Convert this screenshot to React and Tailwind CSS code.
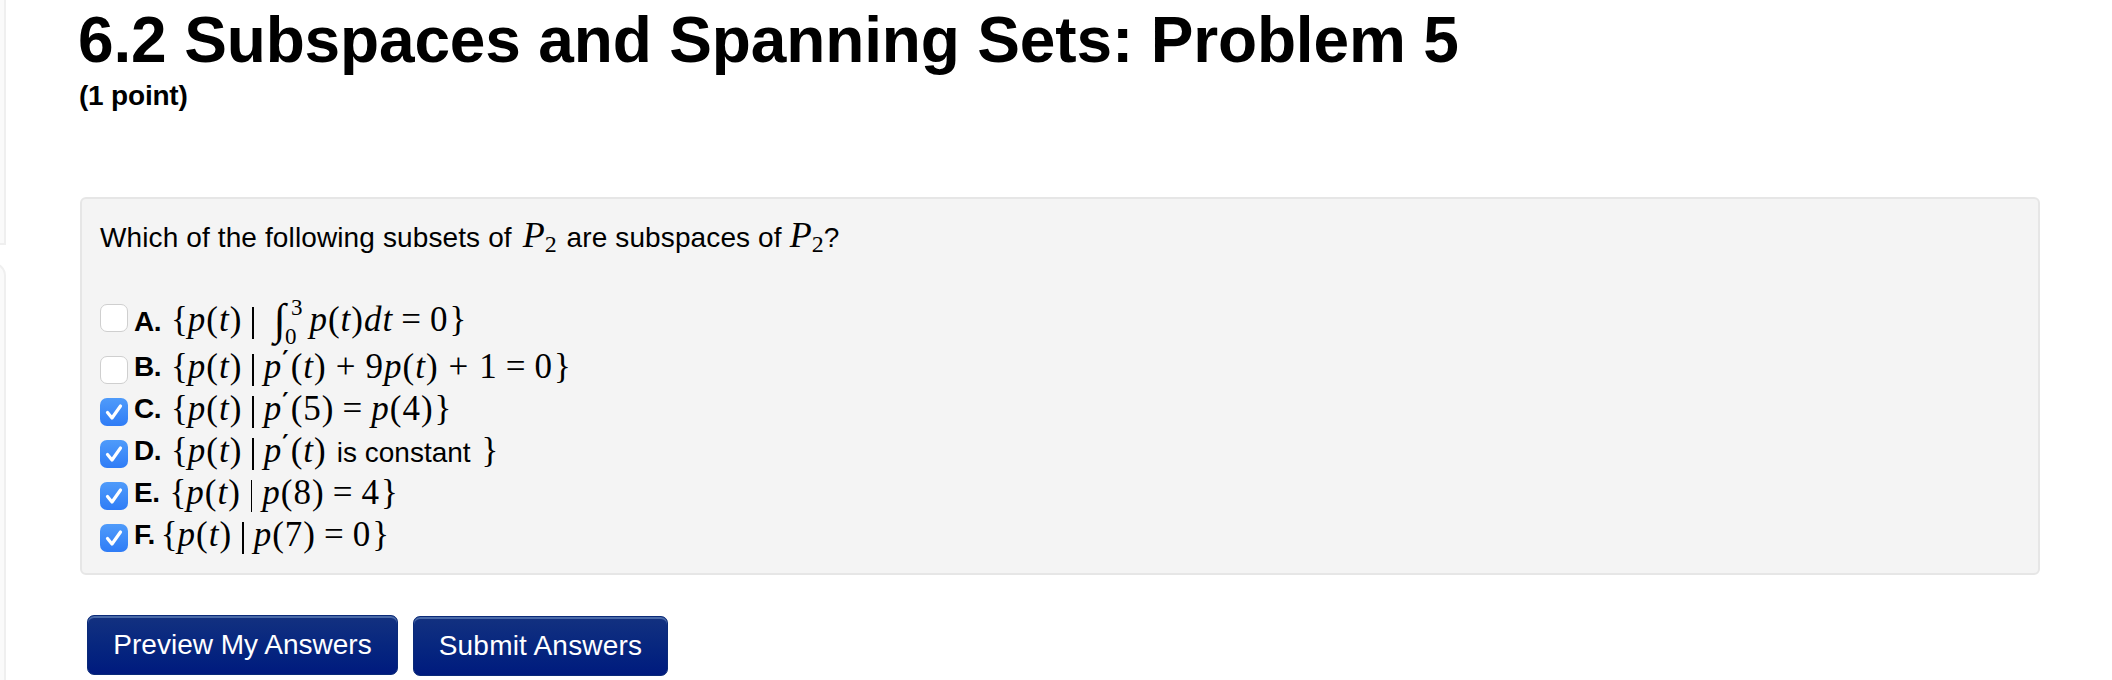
const sans = { fontFamily: '"Liberation Sans", Arial, sans-serif' };

function V({ children }) {
  return <span className="font-['Liberation_Serif',serif] italic">{children}</span>;
}
function R({ children, cls = "" }) {
  return <span className={`font-['Liberation_Serif',serif] ${cls}`}>{children}</span>;
}
const LB = () => <R cls="tracking-normal">{"{"}</R>;
const RB = () => <R cls="ml-[1px] tracking-normal">{"}"}</R>;
const Bar = () => <span className="inline-block w-[1.5px] h-[32px] bg-black mx-[10px] align-[-8px]" />;
const Pt = ({ a = "t", prime }) => (
  <span className="whitespace-pre">
    <V>p</V>
    {prime && <span className="font-['DejaVu_Sans',sans-serif] font-bold text-[24px] align-[10px] mr-[1px]">′</span>}
    <R>(</R>
    {a === "t" ? <V>t</V> : <R>{a}</R>}
    <R>)</R>
  </span>
);
const Op = ({ c, cls = "mx-[8px]" }) => <R cls={cls}>{c}</R>;

function Check({ on }) {
  if (!on)
    return <span className="w-[28px] h-[28px] rounded-[7px] bg-white border border-[#cfcfcf] shrink-0" />;
  return (
    <span className="w-[28px] h-[28px] rounded-[7px] bg-gradient-to-b from-[#4f9bfa] to-[#2f7cf6] shrink-0 flex items-center justify-center">
      <svg width="20" height="20" viewBox="0 0 20 20" fill="none">
        <path d="M3.5 10.5 L8 16 L16.5 4" stroke="white" strokeWidth="3.2" strokeLinecap="round" strokeLinejoin="round" />
      </svg>
    </span>
  );
}

function Row({ on, label, children, h = "h-[42px]", textPos = "-translate-y-[3px]", tail = "mr-[10px]" }) {
  return (
    <div className={`flex items-center ${h}`}>
      <Check on={on} />
      <div className={`flex items-center ${textPos}`}>
        <span className={`font-bold ml-[6px] ${tail} tracking-[-0.5px]`}>{label}</span>
        <span className="text-[35px] tracking-[1px] whitespace-pre leading-none">{children}</span>
      </div>
    </div>
  );
}

const Psub = ({ cls }) => (
  <span className={`text-[36px] tracking-normal ${cls}`}><V>P</V><R cls="text-[24px] align-[-5px]">2</R></span>
);

export default function App() {
  return (
    <div className="relative w-[2112px] h-[680px] overflow-hidden bg-white text-black" style={sans}>
      <div className="absolute left-0 top-0 w-[6px] h-[245px] border-r-2 border-b-2 border-[#efefef] bg-[#fafafa]" />
      <div className="absolute left-[-40px] top-[262px] w-[46px] h-[500px] border-2 border-[#efefef] rounded-[14px] bg-[#fafafa]" />
      <div className="pl-[80px] pr-[72px]">
        <h1 className="-ml-[2px] pt-[4px] text-[64px] leading-[72px] font-bold tracking-[-0.15px]">6.2 Subspaces and Spanning Sets: Problem 5</h1>
        <div className="-ml-[1px] mt-[4px] text-[28px] leading-[32px] font-bold tracking-[-0.2px]">(1 point)</div>
        <div className="mt-[85px] h-[378px] rounded-[6px] border-2 border-[#e6e6e6] bg-[#f4f4f4] pt-[15px] pl-[18px] text-[28px]">
          <div className="h-[42px] leading-[42px] whitespace-pre tracking-[0.12px]">
            Which of the following subsets of{" "}
            <Psub cls="ml-[3px] mr-[2px]" />
            {" "}are subspaces of{" "}
            <Psub cls="" />?
          </div>
          <div className="mt-[31px]">
            <Row label="A." h="h-[62px]" textPos="translate-y-[4px]">
              <LB /><Pt /><Bar /><span className="inline-block w-[10px]" />
              <R cls="inline-block relative top-[3px] text-[44px] italic leading-none">∫</R>
              <span className="inline-flex flex-col align-middle text-[23px] leading-[29px] font-['Liberation_Serif',serif] mr-[6px] -ml-[2px]">
                <span className="ml-[6px]">3</span><span>0</span>
              </span>
              <Pt /><V>dt</V><Op c="=" /><R>0</R><RB />
            </Row>
            <Row label="B.">
              <LB /><Pt /><Bar /><Pt prime /><Op c="+" cls="mx-[9px]" /><R>9</R><Pt /><Op c="+" cls="mx-[10px]" /><R>1</R><Op c="=" /><R>0</R><RB />
            </Row>
            <Row on label="C.">
              <LB /><Pt /><Bar /><Pt a="5" prime /><Op c="=" /><Pt a="4" /><RB />
            </Row>
            <Row on label="D.">
              <LB /><Pt /><Bar /><Pt prime /><span className="text-[28px] mx-[10px] tracking-normal" style={sans}>is constant</span><RB />
            </Row>
            <Row on label="E.">
              <LB /><Pt /><Bar /><Pt a="8" /><Op c="=" /><R>4</R><RB />
            </Row>
            <Row on label="F." tail="mr-[6px]">
              <LB /><Pt /><Bar /><Pt a="7" /><Op c="=" /><R>0</R><RB />
            </Row>
          </div>
        </div>
        <div className="mt-[40px] ml-[7px] flex items-start gap-[15px] text-[28px] text-white">
          <button className="w-[311px] h-[60px] rounded-[7px] border border-[#0a2a78] bg-gradient-to-b from-[#133180] to-[#001a7e] shadow-[inset_0_2px_0_#4a6aa8]">Preview My Answers</button>
          <button className="mt-[1px] w-[255px] h-[60px] rounded-[7px] border border-[#0a2a78] bg-gradient-to-b from-[#133180] to-[#001a7e] shadow-[inset_0_2px_0_#4a6aa8] tracking-[0.2px]">Submit Answers</button>
        </div>
      </div>
    </div>
  );
}
